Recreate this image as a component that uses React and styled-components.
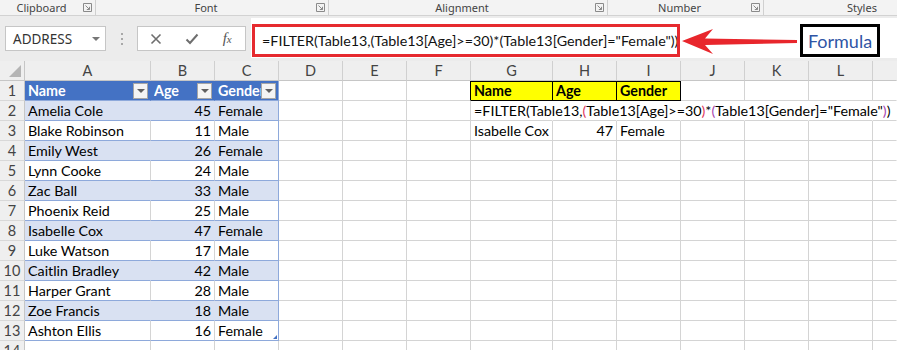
import React from 'react';
import styled, { createGlobalStyle } from 'styled-components';

const Global = createGlobalStyle`
  html, body { margin: 0; padding: 0; background: #fff; }
  body { font-family: Lato, "Liberation Sans", sans-serif; overflow: hidden; }
`;

const Page = styled.div`
  width: 897px;
  height: 350px;
  overflow: hidden;
  display: flex;
  flex-direction: column;
  background: #fff;
`;

/* ---------- Ribbon group labels ---------- */
const Ribbon = styled.div`
  height: 15px;
  flex-shrink: 0;
  display: flex;
  background: #f3f3f3;
  border-bottom: 1px solid #d2d2d2;
`;
const Group = styled.div`
  width: ${p => p.$w}px;
  flex-shrink: 0;
  display: flex;
  align-items: center;
  border-right: ${p => (p.$last ? 'none' : '1px solid #d0d0d0')};
  box-sizing: border-box;
  padding-left: ${p => p.$pl || 0}px;
`;
const GroupLabel = styled.span`
  flex: 1;
  text-align: ${p => (p.$left ? 'left' : 'center')};
  font-family: "Noto Sans", "Open Sans", sans-serif;
  font-size: 11px;
  color: #444;
  line-height: 15px;
`;
const Launcher = styled.svg`
  width: 9px;
  height: 9px;
  margin-right: 3px;
  flex-shrink: 0;
`;

function LauncherIcon() {
  return (
    <Launcher viewBox="0 0 9 9">
      <path d="M0.5 0.5H8.5V8.5H0.5Z" fill="none" stroke="#8a8a8a" strokeWidth="1" />
      <path d="M2.5 2.5L6.5 6.5M3.8 6.5H6.5V3.8" fill="none" stroke="#8a8a8a" strokeWidth="1" />
    </Launcher>
  );
}

/* ---------- Formula bar ---------- */
const FormulaBar = styled.div`
  height: 45px;
  flex-shrink: 0;
  display: flex;
  align-items: center;
  background: #ececec;
  padding-left: 5px;
  box-sizing: border-box;
`;
const NameBox = styled.div`
  width: 101px;
  height: 25px;
  box-sizing: border-box;
  background: #fff;
  border: 1px solid #c6c6c6;
  display: flex;
  align-items: center;
  justify-content: space-between;
  padding: 0 5px 0 7px;
  font-family: "Noto Sans", "Open Sans", sans-serif;
  font-size: 13.5px;
  color: #333;
`;
const Caret = styled.span`
  width: 0;
  height: 0;
  border-left: 4px solid transparent;
  border-right: 4px solid transparent;
  border-top: 4px solid #777;
`;
const Dots = styled.div`
  width: 31px;
  display: flex;
  flex-direction: column;
  align-items: center;
  gap: 3px;
  & > span {
    width: 2px;
    height: 2px;
    background: #a8a8a8;
  }
`;
const FxBox = styled.div`
  width: 109px;
  height: 25px;
  box-sizing: border-box;
  background: #fff;
  border: 1px solid #c6c6c6;
  display: flex;
  align-items: center;
`;
const FxSlot = styled.div`
  width: 36px;
  display: flex;
  justify-content: center;
  align-items: center;
  color: #6a6a6a;
`;
const FxText = styled.span`
  font-family: "Liberation Serif", serif;
  font-style: italic;
  font-size: 15px;
  color: #555;
  & > small { font-size: 11px; }
`;
const FormulaInput = styled.div`
  flex: 1;
  align-self: stretch;
  margin: 2px 0 3px 5px;
  background: #fff;
  display: flex;
  align-items: flex-start;
  padding-top: 6px;
  box-sizing: border-box;
`;
const RedBox = styled.div`
  width: 428px;
  height: 33px;
  flex-shrink: 0;
  box-sizing: border-box;
  margin-left: 1px;
  border: 3px solid #e62a2f;
  display: flex;
  align-items: center;
  padding-left: 7px;
  font-size: 14.3px;
  color: #111;
  white-space: nowrap;
  overflow: hidden;
`;
const Arrow = styled.svg`
  width: 120px;
  height: 30px;
  margin-top: 3px;
  flex-shrink: 0;
`;
const Callout = styled.div`
  width: 80px;
  height: 33px;
  flex-shrink: 0;
  box-sizing: border-box;
  border: 3px solid #000;
  background: #fff;
  display: flex;
  align-items: center;
  justify-content: center;
  font-size: 18px;
  color: #2f55a5;
`;

/* ---------- Sheet ---------- */
const Sheet = styled.div`
  display: grid;
  grid-template-columns: 25px 126px 64px 64px 64px 64px 64px 82px 64px 64px 64px 64px 64px 1fr;
  grid-auto-rows: 20px;
  background: #fff;
`;
const Corner = styled.div`
  position: relative;
  background: #efefef;
  border-right: 1px solid #c6c6c6;
  border-bottom: 1px solid #c6c6c6;
  &::after {
    content: '';
    position: absolute;
    right: 3px;
    bottom: 3px;
    width: 0;
    height: 0;
    border-left: 12px solid transparent;
    border-bottom: 12px solid #b5b5b5;
  }
`;
const ColHead = styled.div`
  background: #efefef;
  border-right: 1px solid ${p => (p.$last ? 'transparent' : '#d0d0d0')};
  border-bottom: 1px solid #c6c6c6;
  display: flex;
  align-items: center;
  justify-content: center;
  font-size: 14.5px;
  color: #444;
`;
const RowHead = styled.div`
  background: #efefef;
  border-right: 1px solid #c6c6c6;
  border-bottom: 1px solid #d8d8d8;
  display: flex;
  align-items: center;
  justify-content: center;
  font-size: 14.5px;
  color: #444;
`;
const Cell = styled.div`
  position: relative;
  box-sizing: border-box;
  min-width: 0;
  background: ${p => p.$bg || 'transparent'};
  border-right: 1px solid ${p => p.$right || '#d4d4d4'};
  border-bottom: 1px solid ${p => p.$bottom || '#d4d4d4'};
  ${p => p.$noRight && 'border-right-color: transparent;'}
  display: flex;
  align-items: center;
  justify-content: ${p => (p.$num ? 'flex-end' : 'flex-start')};
  padding: 0 ${p => (p.$head ? 2 : 3)}px 0 3px;
  font-size: 14.3px;
  font-weight: ${p => (p.$bold ? 700 : 400)};
  color: ${p => p.$color || '#000'};
  white-space: nowrap;
  overflow: ${p => (p.$spill ? 'visible' : 'hidden')};
  z-index: ${p => (p.$spill ? 2 : 'auto')};
  ${p => p.$box && `box-shadow: inset 0 1px 0 #000${p.$first ? ', inset 1px 0 0 #000' : ''};`}
  ${p => p.$handle && `
    &::after {
      content: '';
      position: absolute;
      right: 1px;
      bottom: 1px;
      border-left: 4px solid transparent;
      border-bottom: 4px solid #4472c4;
    }
  `}
`;
const HeadText = styled.span`
  flex: 1;
  min-width: 0;
  overflow: hidden;
`;
const FilterBtn = styled.span`
  flex-shrink: 0;
  width: 15px;
  height: 16px;
  box-sizing: border-box;
  background: #f4f4f4;
  border: 1px solid #a6a6a6;
  display: flex;
  align-items: center;
  justify-content: center;
  &::before {
    content: '';
    border-left: 4px solid transparent;
    border-right: 4px solid transparent;
    border-top: 4px solid #606060;
    margin-top: 1px;
  }
`;
const Paren = styled.span`
  color: ${p => p.$c};
`;

const people = [
  ['Amelia Cole', 45, 'Female'],
  ['Blake Robinson', 11, 'Male'],
  ['Emily West', 26, 'Female'],
  ['Lynn Cooke', 24, 'Male'],
  ['Zac Ball', 33, 'Male'],
  ['Phoenix Reid', 25, 'Male'],
  ['Isabelle Cox', 47, 'Female'],
  ['Luke Watson', 17, 'Male'],
  ['Caitlin Bradley', 42, 'Male'],
  ['Harper Grant', 28, 'Male'],
  ['Zoe Francis', 18, 'Male'],
  ['Ashton Ellis', 16, 'Female'],
];

const columns = ['A', 'B', 'C', 'D', 'E', 'F', 'G', 'H', 'I', 'J', 'K', 'L', ''];
const FORMULA = '=FILTER(Table13,(Table13[Age]>=30)*(Table13[Gender]="Female"))';
const RED = '#e0355c';
const PURPLE = '#a543b0';
const BLUE_LINE = '#8ea9db';

function ColoredFormula() {
  return (
    <>
      =FILTER(Table13,<Paren $c={RED}>(</Paren>Table13[Age]&gt;=30<Paren $c={RED}>)</Paren>*
      <Paren $c={PURPLE}>(</Paren>Table13[Gender]="Female"<Paren $c={PURPLE}>)</Paren>)
    </>
  );
}

function renderRow(r) {
  const out = [<RowHead key={`h${r}`}>{r}</RowHead>];
  const band = r >= 2 && r <= 13 && r % 2 === 0;
  const tBg = band ? '#d9e1f2' : undefined;

  // table A..C
  if (r === 1) {
    ['Name', 'Age', 'Gender'].forEach((t, i) => {
      out.push(
        <Cell key={`t${r}${i}`} $bg="#4472c4" $right={i === 2 ? BLUE_LINE : '#4472c4'} $bottom={BLUE_LINE} $bold $head $color="#fff">
          <HeadText>{t}</HeadText>
          <FilterBtn />
        </Cell>
      );
    });
  } else if (r <= 13) {
    const p = people[r - 2];
    out.push(<Cell key={`a${r}`} $bg={tBg} $right={band ? '#d9e1f2' : undefined} $bottom={BLUE_LINE}>{p[0]}</Cell>);
    out.push(<Cell key={`b${r}`} $bg={tBg} $right={band ? '#d9e1f2' : undefined} $bottom={BLUE_LINE} $num>{p[1]}</Cell>);
    out.push(<Cell key={`c${r}`} $bg={tBg} $right={BLUE_LINE} $bottom={BLUE_LINE} $handle={r === 13}>{p[2]}</Cell>);
  } else {
    out.push(<Cell key={`a${r}`} />, <Cell key={`b${r}`} />, <Cell key={`c${r}`} />);
  }

  // D..F
  ['D', 'E', 'F'].forEach(c => out.push(<Cell key={`${c}${r}`} $right={r === 1 && c === 'F' ? '#000' : undefined} />));

  // G..I
  if (r === 1) {
    ['Name', 'Age', 'Gender'].forEach((t, i) => {
      out.push(
        <Cell key={`y${i}`} $bg="#ffff00" $right="#000" $bottom="#000" $bold $box>
          {t}
        </Cell>
      );
    });
  } else if (r === 2) {
    out.push(
      <Cell key="g2" $spill $noRight>
        <ColoredFormula />
      </Cell>
    );
    out.push(<Cell key="h2" $noRight />, <Cell key="i2" $noRight />);
  } else if (r === 3) {
    out.push(<Cell key="g3">Isabelle Cox</Cell>, <Cell key="h3" $num>47</Cell>, <Cell key="i3">Female</Cell>);
  } else {
    out.push(<Cell key={`g${r}`} />, <Cell key={`hh${r}`} />, <Cell key={`i${r}`} />);
  }

  // J..M
  ['J', 'K', 'L', 'M'].forEach(c => out.push(<Cell key={`${c}${r}`} $noRight={r === 2 || c === 'M'} />));
  return out;
}

export default function App() {
  return (
    <Page>
      <Global />
      <Ribbon>
        <Group $w={96}>
          <GroupLabel>Clipboard</GroupLabel>
          <LauncherIcon />
        </Group>
        <Group $w={233}>
          <GroupLabel>Font</GroupLabel>
          <LauncherIcon />
        </Group>
        <Group $w={279}>
          <GroupLabel>Alignment</GroupLabel>
          <LauncherIcon />
        </Group>
        <Group $w={156}>
          <GroupLabel>Number</GroupLabel>
          <LauncherIcon />
        </Group>
        <Group $w={133} $last $pl={83}>
          <GroupLabel $left>Styles</GroupLabel>
        </Group>
      </Ribbon>

      <FormulaBar>
        <NameBox>
          <span>ADDRESS</span>
          <Caret />
        </NameBox>
        <Dots>
          <span />
          <span />
          <span />
        </Dots>
        <FxBox>
          <FxSlot>
            <svg width="12" height="12" viewBox="0 0 12 12">
              <path d="M1.5 1.5L10.5 10.5M10.5 1.5L1.5 10.5" stroke="#6e6e6e" strokeWidth="1.6" />
            </svg>
          </FxSlot>
          <FxSlot>
            <svg width="14" height="12" viewBox="0 0 14 12">
              <path d="M1.5 6.5L5 10L12.5 1.5" fill="none" stroke="#6e6e6e" strokeWidth="2" />
            </svg>
          </FxSlot>
          <FxSlot>
            <FxText>
              f<small>x</small>
            </FxText>
          </FxSlot>
        </FxBox>
        <FormulaInput>
          <RedBox>{FORMULA}</RedBox>
          <Arrow viewBox="0 0 120 30">
            <path
              d="M2 14 L33 2 L25 11.5 L117 13 L117 16 L25 18 L33 27 Z"
              fill="#e8262c"
              stroke="#ffffff"
              strokeWidth="1.5"
              strokeLinejoin="round"
              paintOrder="stroke"
            />
          </Arrow>
          <Callout>Formula</Callout>
        </FormulaInput>
      </FormulaBar>

      <Sheet>
        <Corner />
        {columns.map((c, i) => (
          <ColHead key={`c${i}`} $last={i === columns.length - 1}>
            {c}
          </ColHead>
        ))}
        {Array.from({ length: 14 }, (_, i) => renderRow(i + 1))}
      </Sheet>
    </Page>
  );
}
